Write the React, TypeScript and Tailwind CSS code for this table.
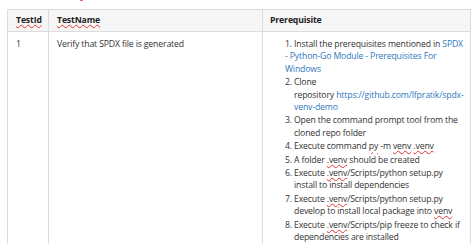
const link = 'text-[#2f78c0]'
const squig = 'underline decoration-wavy decoration-[#e03131] decoration-[0.5px] underline-offset-[1px]'

export default function App() {
  return (
    <div className="relative h-[244px] w-[474px] overflow-hidden bg-white font-['Open_Sans',sans-serif] text-[8.7px] tracking-[-0.15px] text-[#333]">
      {/* clipped heading above the table */}
      <div className="h-[3px] overflow-hidden pl-[52px]">
        <div className="-mt-[19px] text-[18px] font-semibold leading-[18px] text-[#d9302c]">Step</div>
      </div>
      <div className="ml-[7px] mt-[6px] w-[464px]">
        <table className="w-full table-fixed border-collapse text-left">
          <colgroup>
            <col className="w-[41px]" />
            <col className="w-[214px]" />
            <col />
          </colgroup>
          <thead>
            <tr className="h-[22px] bg-[#f6f6f6]">
              <th className="border border-[#dcdcdc] px-[8px] font-bold text-[#222]">
                <span className={squig}>TestId</span>
              </th>
              <th className="border border-[#dcdcdc] px-[8px] font-bold text-[#222]">
                <span className={squig}>TestName</span>
              </th>
              <th className="border border-[#dcdcdc] px-[7px] font-bold text-[#222]">Prerequisite</th>
            </tr>
          </thead>
          <tbody>
            <tr className="align-top">
              <td className="border border-[#dcdcdc] px-[8px] pt-[6px] leading-[13px]">1</td>
              <td className="border border-[#dcdcdc] px-[8px] pt-[6px] leading-[13px]">Verify that SPDX file is generated</td>
              <td className="border border-[#dcdcdc] py-[6px] pl-[22px] pr-[6px] leading-[12.4px]">
                <div>
                  1. Install the prerequisites mentioned in <span className={link}>SPDX - Python-Go Module - Prerequisites For Windows</span>
                </div>
                <Item n={2}>
                  Clone repository{'\u00a0'}<span className={link}>https://github.com/lfpratik/spdx-venv-demo</span>
                </Item>
                <Item n={3}>Open the command prompt tool from the cloned repo folder</Item>
                <Item n={4}>
                  Execute command <span className={squig}>py</span> -m <span className={squig}>venv</span> <span className={squig}>.venv</span>
                </Item>
                <Item n={5}>
                  A folder <span className={squig}>.venv</span> should be created
                </Item>
                <Item n={6}>
                  Execute <span className={squig}>.venv</span>/Scripts/python setup.py install to install dependencies
                </Item>
                <Item n={7}>
                  Execute <span className={squig}>.venv</span>/Scripts/python setup.py develop to install local package into <span className={squig}>venv</span>
                </Item>
                <Item n={8}>
                  Execute <span className={squig}>.venv</span>/Scripts/pip freeze to check if dependencies are installed
                </Item>
              </td>
            </tr>
          </tbody>
        </table>
      </div>
    </div>
  )
}

function Item({ n, children }: { n: number; children: React.ReactNode }) {
  return (
    <div className="mt-[1px] flex">
      <span className="w-[9px] shrink-0">{n}.</span>
      <span className="min-w-0">{children}</span>
    </div>
  )
}
